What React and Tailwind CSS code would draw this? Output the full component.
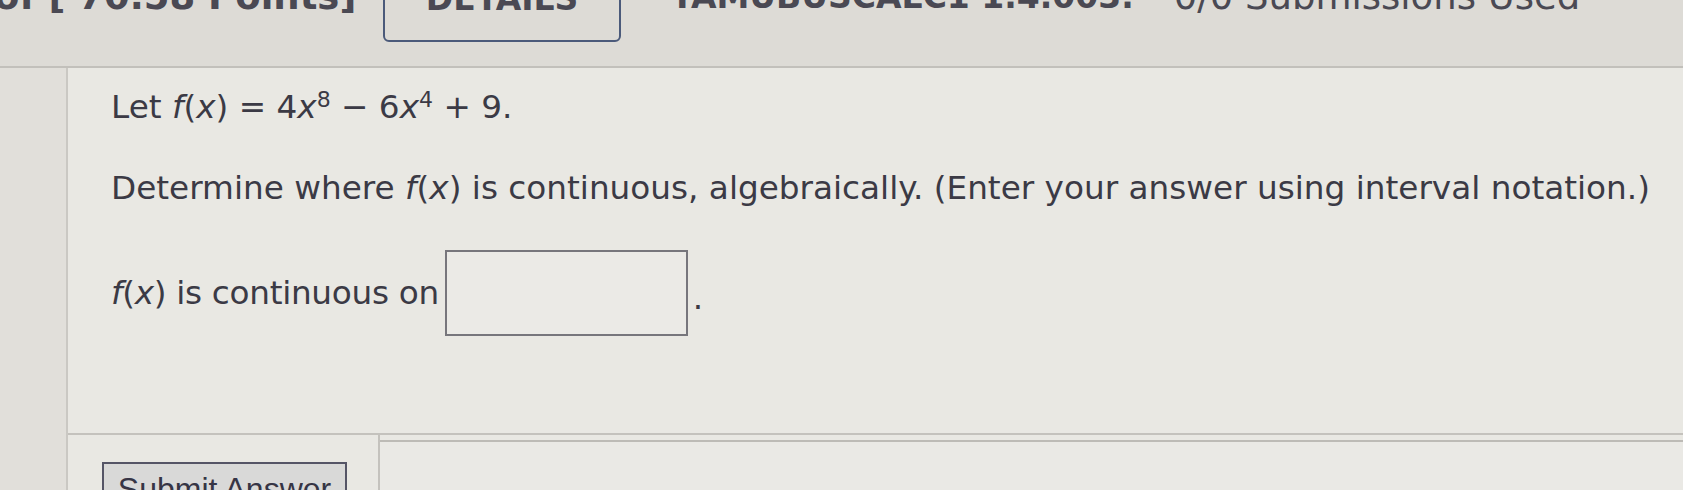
import React from "react";

const ink = "text-[#3b3a45]";

function Fx() {
  return (
    <span>
      <i>f</i>(<i>x</i>)
    </span>
  );
}

export default function App() {
  return (
    <div
      className={`w-[1683px] h-[490px] overflow-hidden bg-[#e9e8e3] ${ink} flex flex-col`}
      style={{ fontFamily: '"DejaVu Sans", Verdana, sans-serif' }}
    >
      {/* header strip, mostly off the top of the photo */}
      <div className="h-[68px] shrink-0 bg-[#dddbd6] border-b-2 border-[#c2c0bb] overflow-hidden">
        <div className="flex items-start -mt-[21px] leading-[36px] text-[#4a4953]">
          <span className="font-bold text-[37px] w-[389px] shrink-0 -ml-[6px] whitespace-nowrap">of [ 70.58 Points]</span>
          <div className="w-[238px] h-[63px] shrink-0 border-2 border-[#4b5a7a] rounded-b-[6px] flex items-start justify-center font-bold text-[33px]">
            DETAILS
          </div>
          <span className="font-bold text-[33px] ml-[50px] whitespace-nowrap">TAMUBUSCALC1 1.4.003.</span>
          <span className="text-[37px] ml-[40px] whitespace-nowrap">0/0 Submissions Used</span>
        </div>
      </div>

      <div className="flex flex-1 min-h-0">
        {/* left margin strip */}
        <div className="w-[68px] shrink-0 bg-[#e1dfda] border-r-2 border-[#cac8c3]" />

        <div className="flex-1 flex flex-col min-w-0">
          <div className="h-[367px] shrink-0 border-b-2 border-[#c4c2bd] pl-[43px] pt-[20px] text-[32.7px] leading-[38px]">
            <p>
              Let <Fx /> = 4<i>x</i>
              <sup className="text-[22px] relative -top-[11px]">8</sup> − 6<i>x</i>
              <sup className="text-[22px] relative -top-[11px]">4</sup> + 9.
            </p>
            <p className="mt-[43px] whitespace-nowrap">
              Determine where <Fx /> is continuous, algebraically. (Enter your answer using interval
              notation.)
            </p>
            <div className="mt-[43px] flex items-center">
              <span className="tracking-[-0.3px]">
                <Fx /> is continuous on
              </span>
              <div className="ml-[6px] w-[243px] h-[86px] border-2 border-[#77767c] bg-[#ebeae6]" />
              <span className="ml-[5px] mt-[10px]">.</span>
            </div>
          </div>

          <div className="flex flex-1">
            <div className="w-[312px] shrink-0 border-r-2 border-[#c4c2bd] pl-[34px] pt-[27px]">
              <button
                className="w-[245px] h-[50px] bg-[#d9d9d8] border-2 border-[#555566] text-[32px] leading-[32px] text-[#363545] flex justify-center pt-[9px]"
                style={{ fontFamily: '"Liberation Sans", Arial, sans-serif' }}
              >
                Submit Answer
              </button>
            </div>
            <div className="flex-1 mt-[5px] border-t-2 border-[#bdbbb6] bg-[#eae9e5]" />
          </div>
        </div>
      </div>
    </div>
  );
}
